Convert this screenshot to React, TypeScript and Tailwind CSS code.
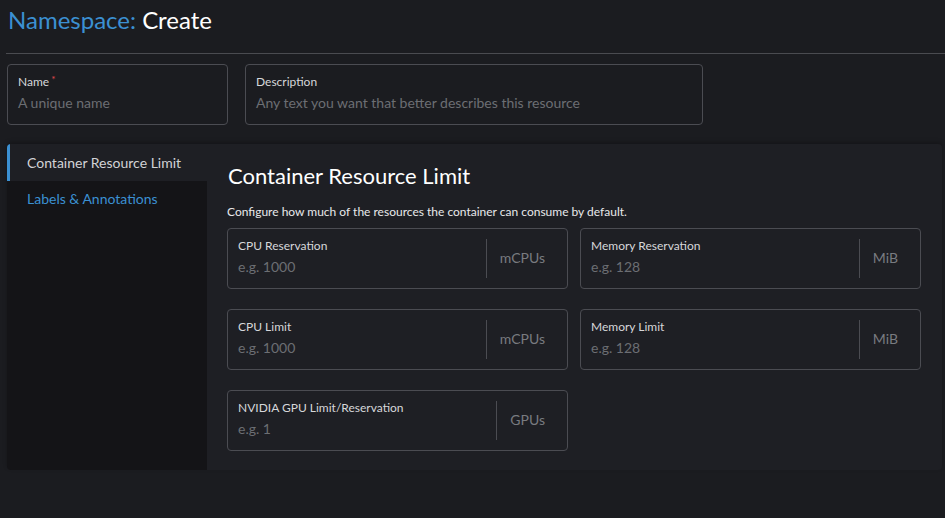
import React from "react";

type Field = { label: string; placeholder: string; unit: string };

const FIELDS: Field[] = [
  { label: "CPU Reservation", placeholder: "e.g. 1000", unit: "mCPUs" },
  { label: "Memory Reservation", placeholder: "e.g. 128", unit: "MiB" },
  { label: "CPU Limit", placeholder: "e.g. 1000", unit: "mCPUs" },
  { label: "Memory Limit", placeholder: "e.g. 128", unit: "MiB" },
  { label: "NVIDIA GPU Limit/Reservation", placeholder: "e.g. 1", unit: "GPUs" },
];

function TextBox({ label, placeholder, required, className }: { label: string; placeholder: string; required?: boolean; className: string }) {
  return (
    <div className={`flex flex-col h-[61px] rounded-[4px] border border-[#4b4c52] px-[10px] pt-[9px] ${className}`}>
      <span className="text-[12px] leading-[16px] text-[#d6d7da]">
        {label}
        {required && <span className="text-[#e0484e] ml-[2px] relative -top-[3px] text-[10px]">*</span>}
      </span>
      <span className="mt-[4px] text-[14px] leading-[18px] text-[#6c6e73]">{placeholder}</span>
    </div>
  );
}

function UnitBox({ field }: { field: Field }) {
  return (
    <div className="flex h-[61px] rounded-[4px] border border-[#4b4c52]">
      <div className="flex-1 flex flex-col px-[10px] pt-[9px]">
        <span className="text-[12px] leading-[16px] text-[#d6d7da]">{field.label}</span>
        <span className="mt-[4px] text-[14px] leading-[18px] text-[#6c6e73]">{field.placeholder}</span>
      </div>
      <div className="my-[10px] w-px bg-[#4b4c52]" />
      <div className="flex items-center pl-[13px] pr-[22px] pb-[2px] text-[14px] text-[#797b80]">{field.unit}</div>
    </div>
  );
}

export default function App() {
  return (
    <div className="min-h-screen w-full bg-[#1b1c20] pl-[7px] pb-[48px]" style={{ fontFamily: "Lato, 'Noto Sans', sans-serif" }}>
      <h1 className="pl-px pt-[4px] text-[24px] leading-[32px]">
        <span className="text-[#3b90d2]">Namespace:</span>
        <span className="text-white"> Create</span>
      </h1>
      <div className="mt-[17px] h-px bg-[#4a4b50] -ml-px" />

      <div className="mt-[10px] flex gap-[17px]">
        <TextBox label="Name" placeholder="A unique name" required className="w-[221px]" />
        <TextBox label="Description" placeholder="Any text you want that better describes this resource" className="w-[458px]" />
      </div>

      {/* Tabbed panel */}
      <div className="mt-[19px] mr-[3px] flex h-[326px] rounded-[4px] overflow-hidden bg-[#1e1f24] shadow-[0_-2px_4px_rgba(0,0,0,0.25)]">
        <div className="w-[200px] bg-[#141417] flex flex-col">
          <div className="h-[37px] flex items-center bg-[#1e1f24] border-l-[3px] border-[#3b90d2] pl-[17px] text-[14px] text-[#d2d3d6]">
            Container Resource Limit
          </div>
          <div className="h-[34px] flex items-center pl-[20px] text-[14px] text-[#3b90d2]">Labels &amp; Annotations</div>
        </div>

        <div className="flex-1 pl-[20px] pr-[21px] pt-[18px]">
          <h2 className="pl-px text-[22px] leading-[28px] text-white">Container Resource Limit</h2>
          <p className="mt-[14px] text-[12px] leading-[16px] text-[#e8e9eb]">
            Configure how much of the resources the container can consume by default.
          </p>
          <div className="mt-[8px] grid grid-cols-2 gap-x-[12px] gap-y-[20px]">
            {FIELDS.map((f) => (
              <UnitBox key={f.label} field={f} />
            ))}
          </div>
        </div>
      </div>
    </div>
  );
}
